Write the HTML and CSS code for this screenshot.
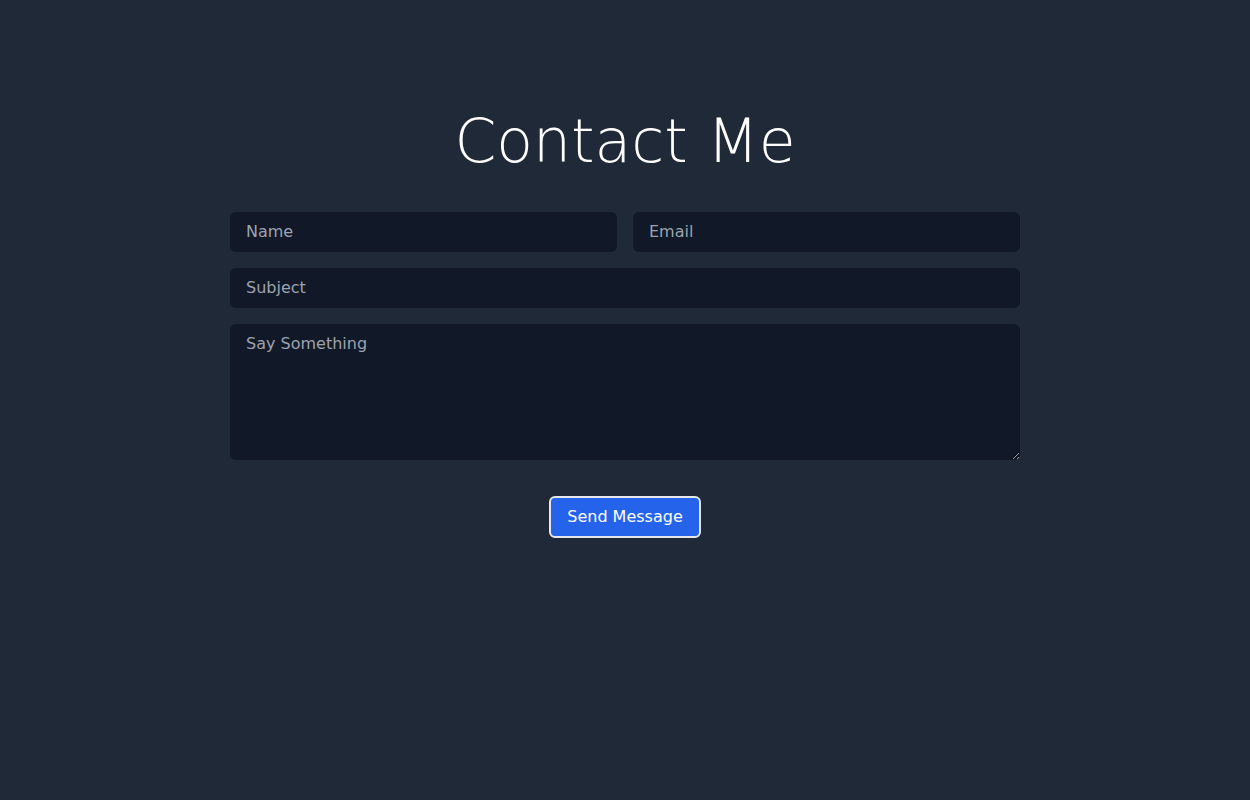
FILE: index.html
```html
<!DOCTYPE html>
<html lang="en">
<head>
<meta charset="utf-8">
<title>Contact Me</title>
<link rel="stylesheet" href="styles.css">
</head>
<body>
<main class="page">
  <h1 class="title">Contact Me</h1>
  <form class="form">
    <div class="row">
      <input class="field" type="text" placeholder="Name">
      <input class="field" type="email" placeholder="Email">
    </div>
    <input class="field" type="text" placeholder="Subject">
    <textarea class="field area" placeholder="Say Something"></textarea>
    <div class="actions">
      <button class="btn" type="button">Send Message</button>
    </div>
  </form>
</main>
</body>
</html>
```

FILE: styles.css
```css
* { box-sizing: border-box; }
html, body {
  margin: 0;
  padding: 0;
  background: #1f2937;
  height: 100%;
}
body {
  font-family: "DejaVu Sans", sans-serif;
  color: #fff;
}
.page {
  display: flex;
  flex-direction: column;
  align-items: center;
  padding-top: 111px;
}
.title {
  margin: 0 0 41px;
  font-size: 60px;
  line-height: 60px;
  font-weight: 200;
  letter-spacing: 0;
}
.form {
  width: 790px;
  display: flex;
  flex-direction: column;
  gap: 16px;
}
.row {
  display: grid;
  grid-template-columns: 1fr 1fr;
  gap: 16px;
}
.field {
  display: block;
  width: 100%;
  height: 40px;
  border: none;
  outline: none;
  border-radius: 6px;
  background: #111827;
  color: #fff;
  font-family: "DejaVu Sans", sans-serif;
  font-size: 16px;
  line-height: 24px;
  padding: 7px 16px 9px;
}
.field::placeholder { color: #9ca3af; }
.area {
  height: 136px;
  padding: 8px 16px;
  resize: vertical;
}
.actions {
  display: flex;
  justify-content: center;
  padding-top: 20px;
}
.btn {
  height: 42px;
  background: #2563eb;
  color: #fff;
  border: 2px solid #e5e7eb;
  border-radius: 6px;
  font-family: "DejaVu Sans", sans-serif;
  font-size: 16px;
  line-height: 24px;
  padding: 0 16px;
  white-space: nowrap;
  cursor: pointer;
}
```
